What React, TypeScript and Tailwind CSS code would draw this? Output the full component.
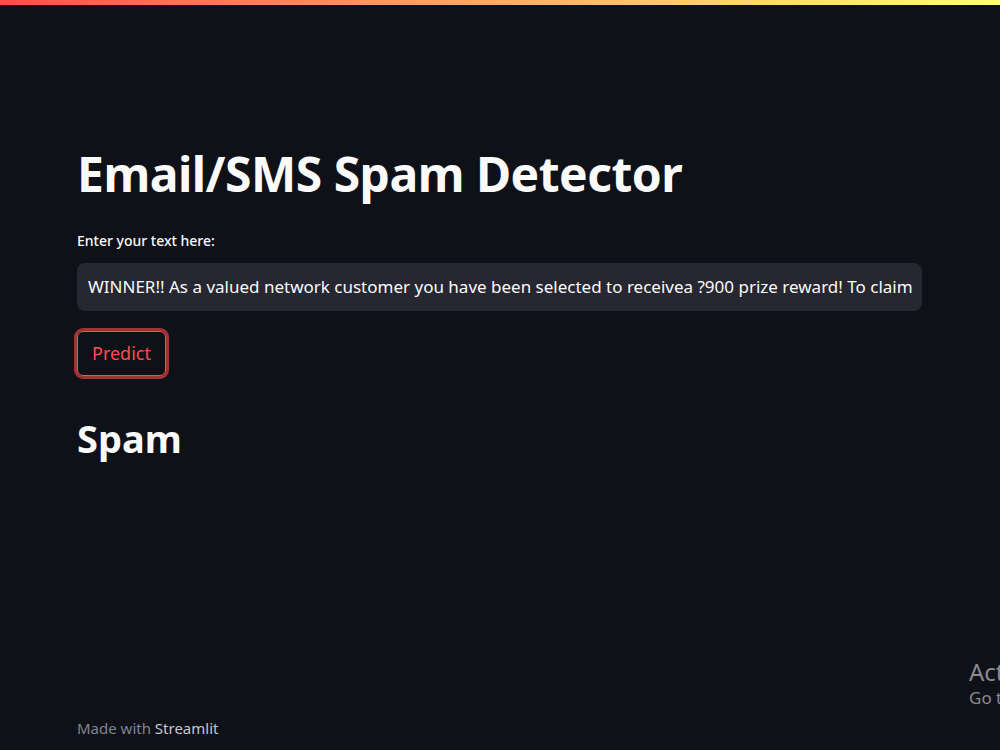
export default function App() {
  return (
    <div className="relative h-[750px] w-[1000px] overflow-hidden bg-[#0e1117] font-['Noto_Sans',sans-serif] text-[#fafafa]">
      {/* top decoration */}
      <div className="h-[5px] w-full bg-gradient-to-r from-[#ff4b4b] to-[#fffd80]" />

      <main className="flex flex-col px-[77px] pt-[140px]">
        <h1 className="text-[48px] font-bold leading-[1.2] tracking-[-0.5px]">
          Email/SMS Spam Detector
        </h1>

        <label className="mt-[31px] text-[14px] font-medium leading-none text-[#fafafa]">
          Enter your text here:
        </label>
        <div className="mt-[15px] flex h-[48px] w-[845px] items-center overflow-hidden whitespace-nowrap rounded-[8px] bg-[#262730] px-[11px] text-[17px]">
          WINNER!! As a valued network customer you have been selected to receivea ?900 prize reward! To claim
        </div>

        <div className="mt-[20px]">
          <button className="rounded-[6px] border border-[#ff4b4b] px-[14px] py-[8px] text-[18px] leading-[1.5] text-[#ff4b4b] ring-[3px] ring-[#ff4b4b]/60">
            Predict
          </button>
        </div>

        <h2 className="mt-[40px] text-[38px] font-bold leading-[1.2]">Spam</h2>
      </main>

      <footer className="absolute bottom-[11px] left-[77px] text-[15px] text-[#808495]">
        Made with <span className="text-[#c6c6cf]">Streamlit</span>
      </footer>

      {/* windows watermark */}
      <div className="absolute left-[969px] top-[658px] whitespace-nowrap text-[#8a8a8f]">
        <div className="text-[24px] leading-[1.2]">Activate Windows</div>
        <div className="text-[17px] leading-[1.3]">Go to Settings to activate Windows.</div>
      </div>
    </div>
  );
}
